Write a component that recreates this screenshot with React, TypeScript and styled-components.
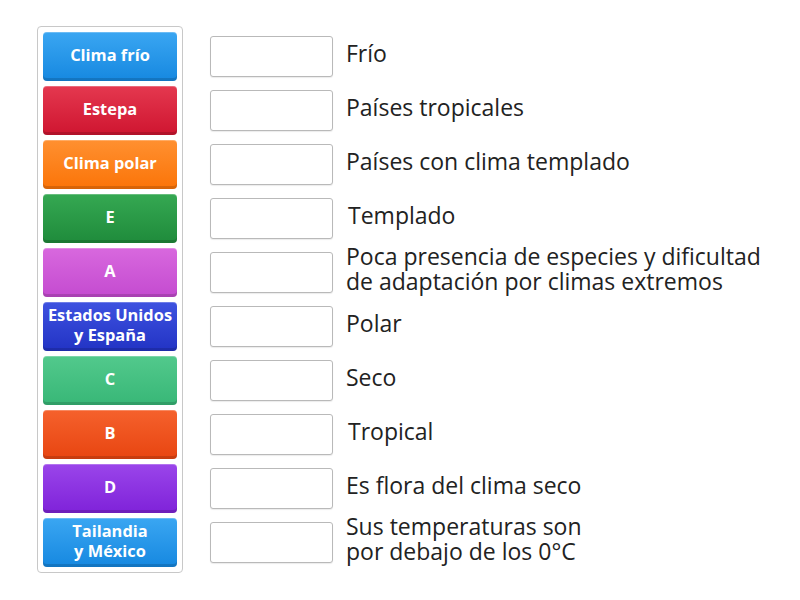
import React from 'react';
import styled, { createGlobalStyle } from 'styled-components';

const GlobalStyle = createGlobalStyle`
  body {
    margin: 0;
    background: #ffffff;
    font-family: 'Open Sans', 'Noto Sans', sans-serif;
  }
`;

const Page = styled.div`
  display: flex;
  align-items: flex-start;
  padding: 26px 0 0 37px;
`;

const TilePanel = styled.div`
  display: flex;
  flex-direction: column;
  gap: 5px;
  width: 134px;
  padding: 5px;
  border: 1px solid #c8c8c8;
  border-radius: 4px;
`;

const Tile = styled.div<{ top: string; bottom: string }>`
  display: flex;
  align-items: center;
  justify-content: center;
  height: 49px;
  border-radius: 4px;
  background: linear-gradient(to bottom, ${(p) => p.top}, ${(p) => p.bottom});
  box-shadow: inset 0 -3px 0 rgba(0, 0, 0, 0.14), inset 0 1px 0 rgba(255, 255, 255, 0.25);
  color: #ffffff;
  font-size: 16.4px;
  font-weight: 700;
  line-height: 20px;
  text-align: center;
  white-space: nowrap;
`;

const TileText = styled.div`
  margin-top: -3px;
`;

const Targets = styled.div`
  display: flex;
  flex-direction: column;
  gap: 5px;
  margin-left: 27px;
  padding-top: 6px;
`;

const Row = styled.div`
  display: flex;
  align-items: center;
  height: 49px;
`;

const DropBox = styled.div`
  flex: none;
  width: 121px;
  height: 39px;
  border: 1px solid #b9b9b9;
  border-radius: 3px;
  background: #ffffff;
  box-shadow: 0 1px 1px rgba(0, 0, 0, 0.08);
`;

const Label = styled.div<{ shift?: number }>`
  margin-left: ${(p) => 13 + (p.shift || 0)}px;
  margin-top: -7px;
  color: #222222;
  font-size: 23px;
  line-height: 25px;
  white-space: nowrap;
`;

const tiles = [
  { text: 'Clima frío', top: '#3aa6f2', bottom: '#1688e0' },
  { text: 'Estepa', top: '#e4384f', bottom: '#cf1530' },
  { text: 'Clima polar', top: '#ff9030', bottom: '#fb7408' },
  { text: 'E', top: '#35a852', bottom: '#1f8b3b' },
  { text: 'A', top: '#d868de', bottom: '#c44bd0' },
  { text: 'Estados Unidos\ny España', top: '#3e52e0', bottom: '#2233c4' },
  { text: 'C', top: '#52c98c', bottom: '#38b777' },
  { text: 'B', top: '#f5612c', bottom: '#e84511' },
  { text: 'D', top: '#9a45ea', bottom: '#7f22d9' },
  { text: 'Tailandia\ny México', top: '#3aa6f2', bottom: '#1688e0' },
];

const labels: Array<{ text: string; shift?: number }> = [
  { text: 'Frío' },
  { text: 'Países tropicales' },
  { text: 'Países con clima templado' },
  { text: 'Templado', shift: 2 },
  { text: 'Poca presencia de especies y dificultad\nde adaptación por climas extremos' },
  { text: 'Polar' },
  { text: 'Seco' },
  { text: 'Tropical', shift: 2 },
  { text: 'Es flora del clima seco' },
  { text: 'Sus temperaturas son\npor debajo de los 0°C' },
];

const renderLines = (text: string) =>
  text.split('\n').map((line, i) => <div key={i}>{line}</div>);

export default function App() {
  return (
    <>
      <GlobalStyle />
      <Page>
        <TilePanel>
          {tiles.map((tile) => (
            <Tile key={tile.text} top={tile.top} bottom={tile.bottom}>
              <TileText>{renderLines(tile.text)}</TileText>
            </Tile>
          ))}
        </TilePanel>
        <Targets>
          {labels.map((label) => (
            <Row key={label.text}>
              <DropBox />
              <Label shift={label.shift}>{renderLines(label.text)}</Label>
            </Row>
          ))}
        </Targets>
      </Page>
    </>
  );
}
